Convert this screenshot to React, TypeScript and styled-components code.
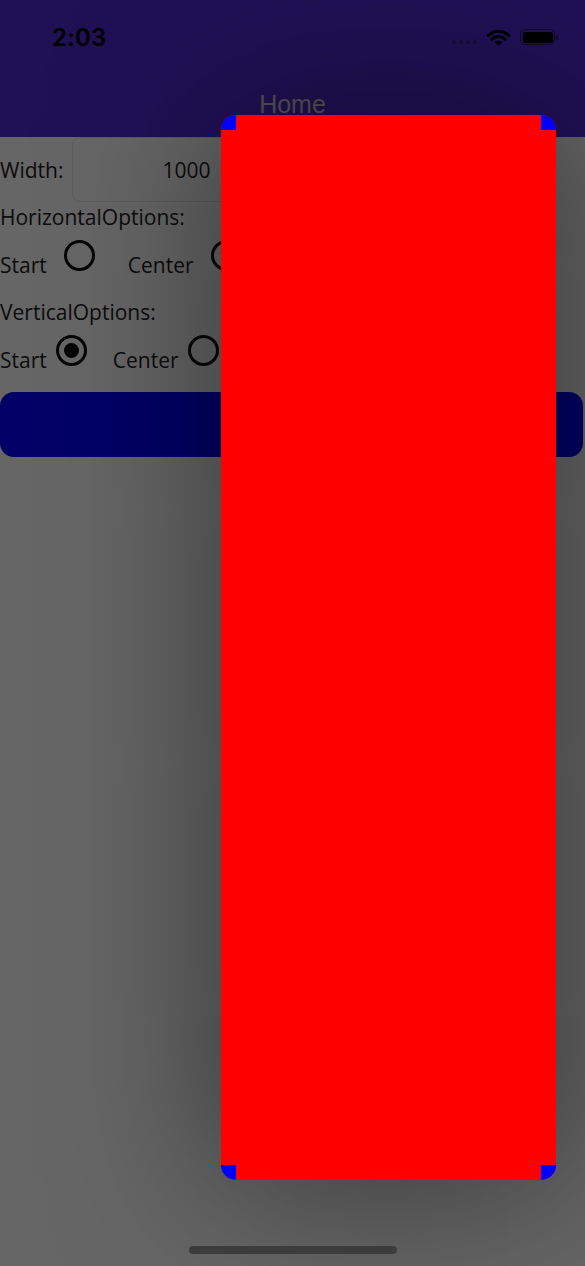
import styled, { createGlobalStyle } from "styled-components";

const GlobalStyle = createGlobalStyle`
  html, body {
    margin: 0;
    padding: 0;
    background: #ffffff;
  }
  #root {
    width: 585px;
    height: 1266px;
  }
`;

const Screen = styled.div`
  position: relative;
  width: 585px;
  height: 1266px;
  overflow: hidden;
  background: #ffffff;
  font-family: "Open Sans", "Noto Sans", sans-serif;
  color: #1e1e1e;
`;

const NavBar = styled.div`
  height: 137px;
  background: #512bd4;
  display: flex;
  flex-direction: column;
`;

const StatusBar = styled.div`
  height: 74px;
  display: flex;
  align-items: center;
  justify-content: space-between;
  padding: 0 27px 0 52px;
  box-sizing: border-box;
`;

const Time = styled.span`
  font-family: Inter, "Liberation Sans", sans-serif;
  font-weight: 600;
  font-size: 24px;
  color: #000000;
  letter-spacing: 0.2px;
`;

const StatusIcons = styled.div`
  display: flex;
  align-items: center;
  gap: 9px;
`;

const Dots = styled.div`
  display: flex;
  gap: 3px;
  margin-top: 10px;
`;

const Dot = styled.span`
  width: 4px;
  height: 4px;
  border-radius: 50%;
  background: rgba(0, 0, 0, 0.35);
`;

const Battery = styled.div`
  display: flex;
  align-items: center;
  gap: 1px;
`;

const BatteryBody = styled.div`
  width: 35px;
  height: 16px;
  box-sizing: border-box;
  border: 1.5px solid rgba(0, 0, 0, 0.45);
  border-radius: 5px;
  padding: 1.5px;
`;

const BatteryFill = styled.div`
  width: 100%;
  height: 100%;
  border-radius: 2.5px;
  background: #000000;
`;

const BatteryNub = styled.div`
  width: 2px;
  height: 5px;
  border-radius: 0 1px 1px 0;
  background: rgba(0, 0, 0, 0.45);
`;

const TitleRow = styled.div`
  flex: 1;
  display: flex;
  align-items: center;
  justify-content: center;
  padding-bottom: 3px;
`;

const Title = styled.span`
  font-family: "Liberation Sans", Arial, sans-serif;
  font-size: 25px;
  color: #d2d2d2;
  line-height: 1;
`;

const Form = styled.div`
  display: flex;
  flex-direction: column;
`;

const WidthRow = styled.div`
  height: 65px;
  display: flex;
  align-items: center;
  gap: 9px;
`;

const Label = styled.span`
  font-size: 21px;
  line-height: 30px;
`;

const Entry = styled.div`
  width: 228px;
  height: 65px;
  box-sizing: border-box;
  border: 1px solid #e6e6e6;
  border-radius: 8px;
  display: flex;
  align-items: center;
  justify-content: center;
  font-size: 21px;
`;

const SectionLabel = styled.div`
  height: 30px;
  font-size: 21px;
  line-height: 30px;
`;

const RadioRow = styled.div<{ $itemGap: number }>`
  height: 65px;
  box-sizing: border-box;
  padding-top: 8px;
  display: flex;
  align-items: flex-start;
  gap: ${({ $itemGap }) => $itemGap}px;
`;

const RadioOption = styled.div<{ $labelGap: number }>`
  display: flex;
  align-items: flex-start;
  gap: ${({ $labelGap }) => $labelGap}px;
`;

const RadioText = styled.span`
  font-size: 21px;
  line-height: 30px;
  margin-top: 10px;
`;

const RadioCircle = styled.span<{ $checked: boolean }>`
  width: 31px;
  height: 31px;
  box-sizing: border-box;
  border: 3px solid #0a0a0a;
  border-radius: 50%;
  display: flex;
  align-items: center;
  justify-content: center;

  &::after {
    content: "";
    width: 15px;
    height: 15px;
    border-radius: 50%;
    background: #0a0a0a;
    display: ${({ $checked }) => ($checked ? "block" : "none")};
  }
`;

const ApplyButton = styled.div`
  height: 65px;
  margin-right: 2px;
  border-radius: 14px;
  background: #0000ff;
`;

const Overlay = styled.div`
  position: absolute;
  inset: 0;
  background: rgba(0, 0, 0, 0.6);
  display: flex;
  flex-direction: column;
  align-items: flex-end;
  padding: 115px 29px 0 0;
`;

const Popup = styled.div`
  width: 335px;
  height: 1065px;
  border-radius: 15px;
  overflow: hidden;
  background: #ff0000;
  display: grid;
  grid-template-columns: 15px 1fr 15px;
  grid-template-rows: 15px 1fr 15px;
  box-shadow: 0 0 160px rgba(0, 0, 0, 0.5);
`;

const Cell = styled.div<{ $corner: boolean }>`
  background: ${({ $corner }) => ($corner ? "#0000ff" : "transparent")};
`;

const HomeIndicator = styled.div`
  position: absolute;
  left: 189px;
  bottom: 12px;
  width: 208px;
  height: 8px;
  border-radius: 4px;
  background: #3c3c3c;
`;

function WifiIcon() {
  return (
    <svg width="25" height="19" viewBox="0 0 24 18">
      <path d="M12 17 L8.46 13.46 A5 5 0 0 1 15.54 13.46 Z" fill="#000" />
      <path
        d="M5.64 10.64 A9 9 0 0 1 18.36 10.64"
        fill="none"
        stroke="#000"
        strokeWidth="2.8"
        strokeLinecap="round"
      />
      <path
        d="M2.1 7.1 A14 14 0 0 1 21.9 7.1"
        fill="none"
        stroke="#000"
        strokeWidth="2.8"
        strokeLinecap="round"
      />
    </svg>
  );
}

type Option = { label: string; checked: boolean };

function RadioGroup({
  options,
  labelGap,
  itemGap,
}: {
  options: Option[];
  labelGap: number;
  itemGap: number;
}) {
  return (
    <RadioRow $itemGap={itemGap}>
      {options.map((o) => (
        <RadioOption key={o.label} $labelGap={labelGap}>
          <RadioText>{o.label}</RadioText>
          <RadioCircle $checked={o.checked} />
        </RadioOption>
      ))}
    </RadioRow>
  );
}

function App() {
  const cells = [0, 1, 2, 3, 4, 5, 6, 7, 8];
  const corners = [0, 2, 6, 8];
  return (
    <>
      <GlobalStyle />
      <Screen>
        <NavBar>
          <StatusBar>
            <Time>2:03</Time>
            <StatusIcons>
              <Dots>
                <Dot />
                <Dot />
                <Dot />
                <Dot />
              </Dots>
              <WifiIcon />
              <Battery>
                <BatteryBody>
                  <BatteryFill />
                </BatteryBody>
                <BatteryNub />
              </Battery>
            </StatusIcons>
          </StatusBar>
          <TitleRow>
            <Title>Home</Title>
          </TitleRow>
        </NavBar>
        <Form>
          <WidthRow>
            <Label>Width:</Label>
            <Entry>1000</Entry>
          </WidthRow>
          <SectionLabel>HorizontalOptions:</SectionLabel>
          <RadioGroup
            labelGap={17}
            itemGap={33}
            options={[
              { label: "Start", checked: false },
              { label: "Center", checked: false },
              { label: "End", checked: false },
            ]}
          />
          <SectionLabel>VerticalOptions:</SectionLabel>
          <RadioGroup
            labelGap={9}
            itemGap={26}
            options={[
              { label: "Start", checked: true },
              { label: "Center", checked: false },
              { label: "End", checked: false },
            ]}
          />
          <ApplyButton />
        </Form>
        <Overlay>
          <Popup>
            {cells.map((i) => (
              <Cell key={i} $corner={corners.includes(i)} />
            ))}
          </Popup>
          <HomeIndicator />
        </Overlay>
      </Screen>
    </>
  );
}

export default App;
